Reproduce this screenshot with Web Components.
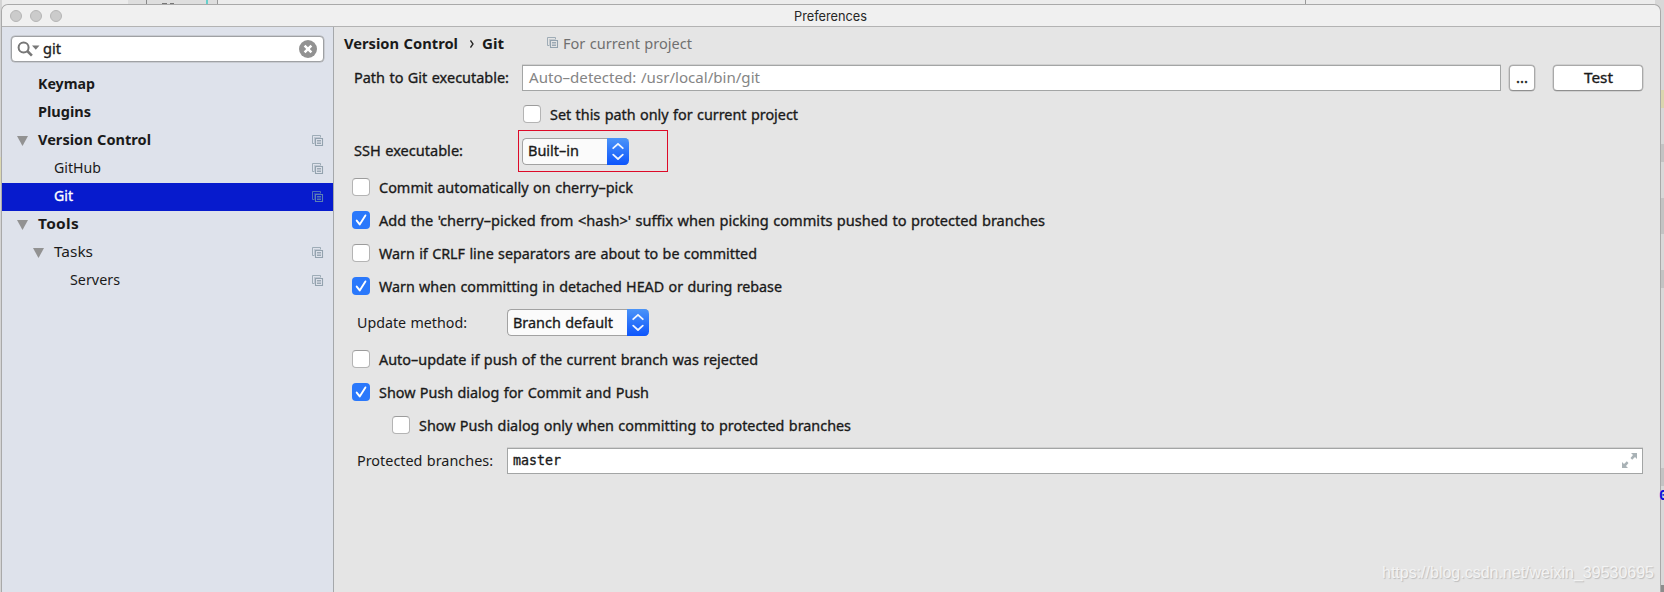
<!DOCTYPE html>
<html lang="en"><head><meta charset="utf-8"><title>Preferences</title>
<style>
html,body{margin:0;height:100%;overflow:hidden}
body{font-family:"Noto Sans","Open Sans",sans-serif;font-size:15px;color:#1a1a1a}
</style></head><body>
<pref-desktop></pref-desktop>
<script>
const define=(name,html,after)=>customElements.define(name,class extends HTMLElement{
  constructor(){super();this.attachShadow({mode:"open"});}
  connectedCallback(){
    const t=document.createElement("template");
    t.innerHTML=typeof html==="function"?html(this):html;
    this.shadowRoot.replaceChildren(t.content.cloneNode(true));
    if(after)after(this);
  }
});

/* A single line label that spreads its letters over a given width. */
define("ui-text",`<style>
:host{display:block;flex:none;white-space:nowrap;line-height:20px;height:20px}
span{display:inline-block;transform-origin:0 50%;transform:translateY(var(--dy,-1px));word-spacing:.7px}
:host([m]) span{-webkit-text-stroke:.35px currentColor}
:host([b]) span{font-weight:700}
</style><span><slot></slot></span>`,el=>{
  const w=+el.getAttribute("w");if(!w)return;
  el.style.width=w+"px";
  const s=el.shadowRoot.querySelector("span"),n=el.textContent.length;
  const nat=s.getBoundingClientRect().width;
  const sx=Math.max(.9,Math.min(1.03,w/nat));
  s.style.letterSpacing=((w/sx-nat)/n)+"px";
  s.style.transform=`translateY(var(--dy,-1px)) scaleX(${sx})`;
});

define("copy-icon",`<style>:host{display:block;flex:none;width:12px;height:12px;color:#93a2ae}svg{display:block}</style>
<svg width="12" height="12" viewBox="0 0 12 12"><path d="M2.5 8.5H.5V.5h8v2" fill="none" stroke="currentColor" opacity=".85"/><path d="M2 2h6v1H3v5H2z" fill="currentColor" opacity=".4"/><path d="M3.5 3.5h7v7h-7z" fill="none" stroke="currentColor" stroke-width="1.1"/><path d="M5 5.5h4M5 7h4M5 8.5h4" stroke="currentColor" stroke-width=".9"/></svg>`);

define("tree-row",el=>`<style>
:host{display:flex;align-items:center;height:28px;box-sizing:border-box;padding:0 9px 3px 0}
:host([selected]){background:#071bcd;color:#fff}
.i{flex:none;width:${el.getAttribute("indent")}px;display:flex;justify-content:flex-end;box-sizing:border-box;padding-right:10px}
copy-icon{margin:2px 0 0 auto}
:host([selected]) copy-icon{color:#5c7fb5}
svg{display:block;margin-top:3px}
</style><div class="i">${el.hasAttribute("open")?'<svg width="11" height="10"><path d="M0 0h11L5.5 10z" fill="#929292"/></svg>':''}</div><slot></slot>${el.hasAttribute("own")?'<copy-icon></copy-icon>':''}`);

define("search-field",`<style>
:host{display:flex;align-items:center;box-sizing:border-box;height:26px;margin:9px 9px 9px 9px;background:#fff;border:1px solid #9fa1a4;border-radius:4px;padding:0 6px 0 5px;box-shadow:0 0 0 .5px #b4b6ba}
svg{display:block;flex:none;margin-top:-1px}.x{margin-left:auto;margin-top:0}
ui-text{margin:0 0 0 3px;color:#222}
</style>
<svg width="23" height="16" viewBox="0 0 23 16"><circle cx="6.6" cy="6.4" r="5" fill="none" stroke="#777" stroke-width="2"/><path d="M10.3 10l4.6 4.6" stroke="#777" stroke-width="2.6"/><path d="M15 4.5h7.5l-3.7 4.2z" fill="#777"/></svg>
<ui-text m w="18">git</ui-text>
<svg class="x" width="18" height="18"><circle cx="9" cy="9" r="9" fill="#929292"/><path d="M5.6 5.6l6.8 6.8M12.4 5.6l-6.8 6.8" stroke="#fff" stroke-width="2.5"/></svg>`);

define("check-row",el=>`<style>
:host{display:flex;height:18px;align-items:center}
.c{flex:none;box-sizing:border-box;width:18px;height:18px;border-radius:4px;background:#fff;border:1px solid #b4b4b4;border-top-color:#9c9c9c;margin-right:9px}
svg{display:block;flex:none;margin-right:9px}
ui-text{margin-top:1px}
</style>${el.hasAttribute("checked")?'<svg width="18" height="18"><rect width="18" height="18" rx="4" fill="#2a78fb"/><path d="M4.7 9.6l3 3.8 5.7-9" fill="none" stroke="#fff" stroke-width="1.9" stroke-linecap="round" stroke-linejoin="round"/></svg>':'<div class="c"></div>'}<ui-text m w="${el.getAttribute("w")-1}">${el.innerHTML}</ui-text>`);

define("combo-box",`<style>
:host{display:flex;flex:none;box-sizing:border-box;height:27px;border-radius:4.5px;background:#fbfbfb;border:1px solid #a2a2a2;border-right:0;padding-left:5px;align-items:center;justify-content:space-between}
.a{width:22px;height:27px;flex:none;border-radius:0 4.5px 4.5px 0;background:linear-gradient(#4b94f8,#0d55fc)}
svg{display:block}
</style><slot></slot><div class="a"><svg width="22" height="27"><path d="M6.2 10.2L11 5.8l4.8 4.4M6.2 16.6L11 21l4.8-4.4" fill="none" stroke="#fff" stroke-width="1.8" stroke-linecap="round" stroke-linejoin="round" opacity=".93"/></svg></div>`);

define("push-button",`<style>
:host{display:flex;flex:none;box-sizing:border-box;height:26px;border:1px solid #a9a9a9;border-bottom-color:#8f8f8f;border-radius:4px;background:#fff;align-items:center;justify-content:center;box-shadow:0 0 0 .5px #bbb}
</style><slot></slot>`);

define("text-box",`<style>
:host{display:flex;box-sizing:border-box;height:26px;border:1px solid #a3a5a5;background:#fff;align-items:center;padding:0 5px 0 6px;justify-content:space-between;box-shadow:0 -1px 0 #d0d0d0}
</style><slot></slot>`);

define("title-bar",`<style>
:host{display:flex;align-items:center;box-sizing:border-box;height:22px;background:#f0f0f0;border-bottom:1px solid #b3b3b3;padding-left:8px;border-radius:6px 6px 0 0;--dy:0px}
i{width:12px;height:12px;border-radius:50%;background:#cbcbcb;border:1px solid #b5b5b5;box-sizing:border-box;margin-right:8px}
ui-text{font-family:Inter,sans-serif;font-size:13px;margin-left:724px;color:#262626;margin-top:1px}
</style><i></i><i></i><i></i><ui-text w="73">Preferences</ui-text>`);

define("side-bar",`<style>
:host{display:flex;flex-direction:column;flex:none;box-sizing:border-box;width:332px;background:#dee2eb;border-right:1px solid #a5a8ab}
</style><search-field></search-field>
<tree-row indent="36"><ui-text b w="57">Keymap</ui-text></tree-row>
<tree-row indent="36"><ui-text b w="53">Plugins</ui-text></tree-row>
<tree-row indent="36" open own><ui-text b w="113">Version Control</ui-text></tree-row>
<tree-row indent="52" own><ui-text w="47">GitHub</ui-text></tree-row>
<tree-row indent="52" selected own><ui-text m w="19">Git</ui-text></tree-row>
<tree-row indent="36" open><ui-text b w="41">Tools</ui-text></tree-row>
<tree-row indent="52" open own><ui-text w="39">Tasks</ui-text></tree-row>
<tree-row indent="68" own><ui-text w="50">Servers</ui-text></tree-row>`);

define("git-settings",`<style>
:host{display:block;flex:1;min-width:0;box-sizing:border-box;background:#e5e5e5;padding:7px 17px 0 10px}
.r{display:flex;align-items:center}
.crumb{height:20px}
.crumb svg{margin:0 8px 0 12px}
.crumb copy-icon{margin:-2px 4px 0 43px}
.path{height:26px;margin:11px 0 0 10px}
.path text-box{flex:1;margin:0 8px 0 13px}
.path push-button+push-button{margin-left:18px}
.only{margin:14px 0 0 179px}
.ssh{height:42px;margin:7px 0 0 10px}
.mark{display:flex;align-items:center;box-sizing:border-box;width:150px;height:42px;border:1px solid #dd0a28;padding-left:3px;margin-left:55px}
.list{display:flex;flex-direction:column;gap:15px;margin-left:8px}
.upd{height:27px;margin:14px 0 14px 13px}
.pro{height:26px;margin:14px 0 0 13px}
.pro text-box{flex:1;margin-left:14px}
.g{color:#858585}.h{color:#707070}
.mono{font-family:"DejaVu Sans Mono",monospace;font-size:13.5px;margin-top:-2px;--dy:0px}
</style>
<div class="r crumb"><ui-text b w="114">Version Control</ui-text><svg width="4" height="8"><path d="M.5.5L3 4 .5 7.5" fill="none" stroke="#222" stroke-width="1.3"/></svg><ui-text b w="22">Git</ui-text><copy-icon></copy-icon><ui-text class="h" w="129">For current project</ui-text></div>
<div class="r path"><ui-text m w="155">Path to Git executable:</ui-text><text-box><ui-text class="g" w="231">Auto–detected: /usr/local/bin/git</ui-text></text-box><push-button style="width:26px"><ui-text m w="12">...</ui-text></push-button><push-button style="width:90px"><ui-text m w="29">Test</ui-text></push-button></div>
<check-row class="only" w="249">Set this path only for current project</check-row>
<div class="r ssh"><ui-text m w="109">SSH executable:</ui-text><div class="mark"><combo-box style="width:107px"><ui-text m w="51">Built–in</ui-text></combo-box></div></div>
<div class="list" style="margin-top:6px">
<check-row w="255">Commit automatically on cherry–pick</check-row>
<check-row checked w="667">Add the 'cherry–picked from &lt;hash&gt;' suffix when picking commits pushed to protected branches</check-row>
<check-row w="379">Warn if CRLF line separators are about to be committed</check-row>
<check-row checked w="404">Warn when committing in detached HEAD or during rebase</check-row></div>
<div class="r upd"><ui-text w="110">Update method:</ui-text><combo-box style="width:142px;margin-left:40px"><ui-text m w="100">Branch default</ui-text></combo-box></div>
<div class="list">
<check-row w="380">Auto–update if push of the current branch was rejected</check-row>
<check-row checked w="271">Show Push dialog for Commit and Push</check-row>
<check-row style="margin-left:40px" w="433">Show Push dialog only when committing to protected branches</check-row></div>
<div class="r pro"><ui-text w="136">Protected branches:</ui-text><text-box style="padding-left:5px"><ui-text m w="48" class="mono">master</ui-text><svg width="15" height="15" style="margin-top:-1px"><path d="M9 0h6v6l-2-2-2.800 2.800-1.700-1.700L11 2zM0 9l2 2 2.800-2.800 1.700 1.700L4 13l2 2H0z" fill="#a9b2b6"/></svg></text-box></div>`);

define("pref-window",`<style>
:host{display:flex;flex-direction:column;box-sizing:border-box;width:1660px;height:592px;margin:4px 0 0 1px;border:1px solid #a9a9a9;border-bottom:0;border-radius:7px 7px 0 0;overflow:hidden;flex:none}
.b{display:flex;flex:1;min-height:0}
</style><title-bar></title-bar><div class="b"><side-bar></side-bar><git-settings></git-settings></div>`);

define("pref-desktop",`<style>
:host{display:flex;position:relative;width:1664px;height:592px;overflow:hidden;background:linear-gradient(90deg,#d4d4d4 2px,#ececec 2px,#ececec 1655px,#d8d8d8 1655px);--dy:-1px}
.e{position:absolute}
.w{position:absolute;left:1382px;top:562px;font:16.1px/20px "Liberation Sans",Arial,sans-serif;color:#f3f3f3;text-shadow:1px 1px 1px #bdbdbd;--dy:0px}
.z{position:absolute;left:1659px;top:485px;color:#1010d8;font:bold 14px/20px "DejaVu Sans Mono",monospace;--dy:0px}
</style>
<div class="e" style="left:128px;top:0;width:90px;height:6px;background:#dedede"></div>
<div class="e" style="left:146px;top:0;width:1px;height:6px;background:#888"></div>
<div class="e" style="left:162px;top:3px;width:5px;height:2px;background:#777"></div>
<div class="e" style="left:170px;top:3px;width:4px;height:2px;background:#777"></div>
<div class="e" style="left:206px;top:0;width:2px;height:6px;background:#65cfcb"></div>
<div class="e" style="left:217px;top:0;width:1px;height:6px;background:#999"></div>
<div class="e" style="left:1305px;top:0;width:1px;height:6px;background:#999"></div>
<div class="e" style="left:0;top:157px;width:2px;height:28px;background:#dcd8b0"></div>
<div class="e" style="left:1659px;top:90px;width:5px;height:18px;background:#dad5ae"></div>
<div class="e" style="left:1659px;top:144px;width:5px;height:18px;background:#c3c3c3"></div>
<div class="e" style="left:1659px;top:198px;width:5px;height:36px;background:#c3c3c3"></div>
<div class="e" style="left:1659px;top:270px;width:5px;height:18px;background:#c3c3c3"></div>
<div class="e" style="left:1659px;top:468px;width:5px;height:18px;background:#c3c3c3"></div>
<div class="e" style="left:1659px;top:585px;width:5px;height:8px;background:#8c8c8c"></div>
<pref-window style="position:relative"></pref-window>
<ui-text class="z">0</ui-text>
<ui-text class="w" w="272">https://blog.csdn.net/weixin_39530695</ui-text>`);
</script></body></html>
